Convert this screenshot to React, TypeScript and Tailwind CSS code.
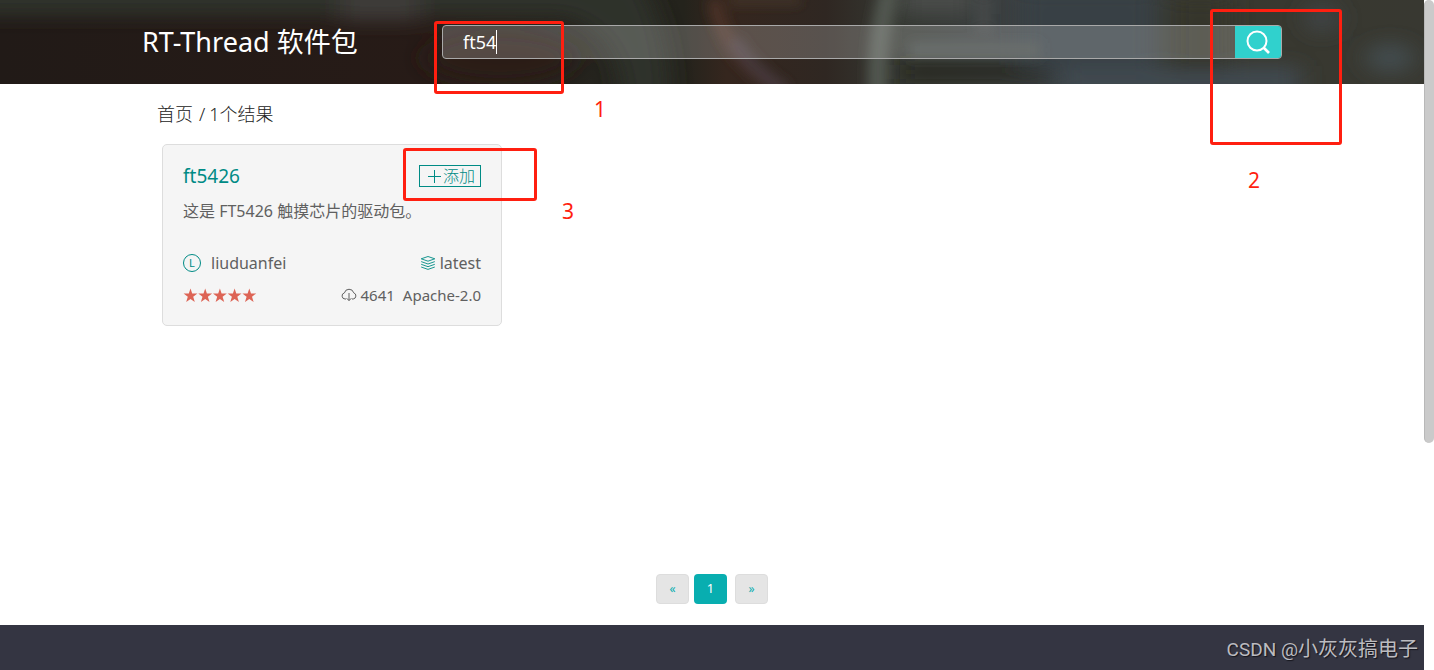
import { useState } from "react";

function HeaderBackdrop() {
  return (
    <svg
      className="absolute inset-0 h-full w-full"
      viewBox="0 0 1424 84"
      preserveAspectRatio="none"
      aria-hidden="true"
    >
      <defs>
        <linearGradient id="base" x1="0" x2="1" y1="0" y2="0">
          <stop offset="0" stopColor="#211a17" />
          <stop offset="0.3" stopColor="#271b17" />
          <stop offset="0.42" stopColor="#25241e" />
          <stop offset="0.48" stopColor="#24231c" />
          <stop offset="0.51" stopColor="#35261e" />
          <stop offset="0.58" stopColor="#2f2722" />
          <stop offset="0.63" stopColor="#353832" />
          <stop offset="0.7" stopColor="#3a3e3f" />
          <stop offset="0.78" stopColor="#394145" />
          <stop offset="0.83" stopColor="#38382f" />
          <stop offset="1" stopColor="#383831" />
        </linearGradient>
        <filter id="soft" filterUnits="userSpaceOnUse" x="-60" y="-60" width="1544" height="204">
          <feGaussianBlur stdDeviation="12 9" />
        </filter>
        <filter id="fine" filterUnits="userSpaceOnUse" x="-60" y="-60" width="1544" height="204">
          <feGaussianBlur stdDeviation="6" />
        </filter>
      </defs>
      <rect width="1424" height="84" fill="url(#base)" />
      <g filter="url(#soft)">
        <rect x="-50" y="-50" width="640" height="66" fill="#2f302c" />
        <rect x="340" y="-15" width="80" height="36" fill="#3c3b37" />
        <path d="M560 -20H640Q670 30 670 100H620Q620 30 560 15Z" fill="#2d302c" />
        <ellipse cx="500" cy="58" rx="75" ry="26" fill="#2b1d19" />
        <rect x="900" y="-20" width="75" height="34" fill="#484b4a" />
        <rect x="900" y="64" width="150" height="16" fill="#25271f" />
        <rect x="1020" y="-10" width="135" height="80" fill="#394145" />
        <rect x="1060" y="66" width="240" height="30" fill="#404a50" />
        <rect x="1170" y="0" width="60" height="70" fill="#35342c" />
        <ellipse cx="1390" cy="58" rx="24" ry="16" fill="#434b4e" />
        <ellipse cx="1322" cy="18" rx="16" ry="16" fill="#414547" />
      </g>
      <g filter="url(#fine)" fill="none">
        <path d="M714 0Q724 58 782 90" stroke="#4b3027" strokeWidth="13" />
        <path d="M734 40Q752 70 786 92" stroke="#44393a" strokeWidth="14" />
        <path d="M890 -10Q876 40 878 96" stroke="#515650" strokeWidth="20" />
        <path d="M730 0H800" stroke="#46382c" strokeWidth="7" />
        <path d="M984 -5V30" stroke="#454a48" strokeWidth="14" />
        <path d="M910 50H1040" stroke="#454b48" strokeWidth="14" />
      </g>
    </svg>
  );
}

function SearchIcon() {
  return (
    <svg className="h-6 w-6" viewBox="0 0 24 24" fill="none" stroke="#fff" strokeWidth="2" aria-hidden="true">
      <circle cx="11" cy="11" r="9.5" />
      <path d="M17.5 17.5 23 23" strokeWidth="2.6" />
    </svg>
  );
}

function LayersIcon() {
  return (
    <svg className="h-4 w-4" viewBox="0 0 16 16" fill="none" stroke="#008b85" strokeWidth="0.9" aria-hidden="true">
      <path d="M8 1.5 14.8 3.8 8 6.2 1.2 3.8Z" />
      <path d="M1.2 6.6 8 9 14.8 6.6M1.2 9.3 8 11.7 14.8 9.3M1.2 12 8 14.4 14.8 12" />
    </svg>
  );
}

function CloudIcon() {
  return (
    <svg className="h-4 w-4" viewBox="0 0 16 16" fill="none" stroke="#606060" strokeWidth="1" aria-hidden="true">
      <path d="M5 12H4A3.1 3.1 0 0 1 3.4 5.9 4.8 4.8 0 0 1 12.7 5.8 3.2 3.2 0 0 1 12.2 12H11" />
      <path d="M8 6V13.5M5.6 11.2 8 13.6 10.4 11.2" />
    </svg>
  );
}

function Rating() {
  return (
    <svg className="h-[15px] w-[74px]" viewBox="0 0 74 15" fill="#dd6455" role="img" aria-label="5">
      {[0, 14.7, 29.4, 44.1, 58.8].map((x) => (
        <path
          key={x}
          transform={`translate(${x} 0)`}
          d="M7.5.4 9.2 5.4H14.4L10.2 8.7 11.8 14 7.5 10.9 3.2 14 4.8 8.7.6 5.4H5.8Z"
        />
      ))}
    </svg>
  );
}

function PackageCard() {
  return (
    <article className="mx-5 w-[340px] rounded-[5px] border border-[#dddddd] bg-[#f5f5f5] px-5 pt-[15px] pb-[14px] text-[#606060]">
      <div className="flex h-8 items-center justify-between">
        <a href="#ft5426" className="text-[19px] text-[#008b85]">ft5426</a>
        <button className="flex h-[22px] items-center border border-[#008b85] pr-[5px] pl-[7px] text-base leading-5 font-light text-[#008b85]">
          <svg className="mr-px h-[15px] w-[15px]" viewBox="0 0 15 15" stroke="#008b85" aria-hidden="true">
            <path d="M7.5 1V14M1 7.5H14" />
          </svg>
          添加
        </button>
      </div>
      <p className="mt-1 h-[51px] text-base leading-[30px]">这是 FT5426 触摸芯片的驱动包。</p>
      <div className="flex h-8 items-center justify-between text-base">
        <span className="flex items-center gap-2.5">
          <span className="flex h-[18px] w-[18px] items-center justify-center rounded-full border border-[#008b85] text-[11px] text-[#008b85]">L</span>
          liuduanfei
        </span>
        <span className="flex items-center gap-1"><LayersIcon />latest</span>
      </div>
      <div className="flex h-8 items-center justify-between text-[15px]">
        <Rating />
        <span className="flex items-center">
          <CloudIcon />
          <span className="ml-1">4641</span>
          <span className="ml-2">Apache-2.0</span>
        </span>
      </div>
    </article>
  );
}

export default function App() {
  const [query, setQuery] = useState("ft54");
  return (
    <div className="relative flex min-h-screen bg-white font-['Noto_Sans','Noto_Sans_CJK_SC',sans-serif]">
      <div className="flex min-w-0 flex-1 flex-col">
        <header className="relative h-21 overflow-hidden">
          <HeaderBackdrop />
          <div className="relative mx-auto flex h-full max-w-[1140px] items-center">
            <h1 className="w-[300px] shrink-0 text-[27px] text-white">RT-Thread 软件包</h1>
            <form
              className="relative flex h-[34px] flex-1 overflow-hidden rounded border border-[#a9a9a9] bg-white/20"
              onSubmit={(e) => e.preventDefault()}
            >
              <input
                aria-label="搜索"
                className="min-w-0 flex-1 bg-transparent px-5 text-lg text-white outline-none"
                value={query}
                onChange={(e) => setQuery(e.target.value)}
              />
              <span className="pointer-events-none absolute inset-y-1 left-5 border-r border-white text-lg text-transparent" aria-hidden="true">
                {query}
              </span>
              <button aria-label="搜索" className="flex w-[46px] items-center justify-center bg-[#30d1cd]">
                <SearchIcon />
              </button>
            </form>
          </div>
        </header>

        <main className="mx-auto flex w-full max-w-[1140px] flex-1 flex-col">
          <nav className="flex h-15 items-center px-[15px] text-lg font-light text-[#222222]">
            <a href="#home">首页</a>
            <span className="mr-1 ml-1.5">/</span>
            <span>1个结果</span>
          </nav>
          <PackageCard />
          <nav className="mt-auto mb-[21px] flex justify-center text-xs">
            <button className="mr-[5px] h-[30px] w-[33px] rounded border border-[#dddddd] bg-[#e5e5e5] text-[#08aeb0]">«</button>
            <button className="mr-2 h-[30px] w-[33px] rounded bg-[#08aeb0] text-[13px] text-white">1</button>
            <button className="h-[30px] w-[33px] rounded border border-[#dddddd] bg-[#e5e5e5] text-[#08aeb0]">»</button>
          </nav>
        </main>

        <footer className="flex h-[45px] items-center justify-end bg-[#343542] px-1.5 pt-1">
          <span className="font-[Roboto,'Noto_Sans_CJK_SC',sans-serif] text-xl text-[#bcbcc0] [text-shadow:1px_1px_1px_#15151c]">
            <span className="text-[19px]">CSDN @</span>小灰灰搞电子
          </span>
        </footer>
      </div>

      <div className="w-2.5 shrink-0 bg-white" aria-hidden="true">
        <div className="h-[443px] rounded-full border-l border-[#b8b8b8] bg-[#cacaca]" />
      </div>

      <div className="pointer-events-none absolute inset-0 text-[21px] leading-6 text-[#ff1f10]">
        <div className="absolute top-[21px] left-[434px] h-[73px] w-[130px] rounded-[3px] border-3 border-[#ff1f10]" />
        <span className="absolute top-[97px] left-[594px]">1</span>
        <div className="absolute top-[9px] left-[1210px] h-[136px] w-[132px] rounded-[3px] border-3 border-[#ff1f10]" />
        <span className="absolute top-[168px] left-[1248px]">2</span>
        <div className="absolute top-[148px] left-[403px] h-[53px] w-[134px] rounded-[3px] border-3 border-[#ff1f10]" />
        <span className="absolute top-[199px] left-[562px]">3</span>
      </div>
    </div>
  );
}
